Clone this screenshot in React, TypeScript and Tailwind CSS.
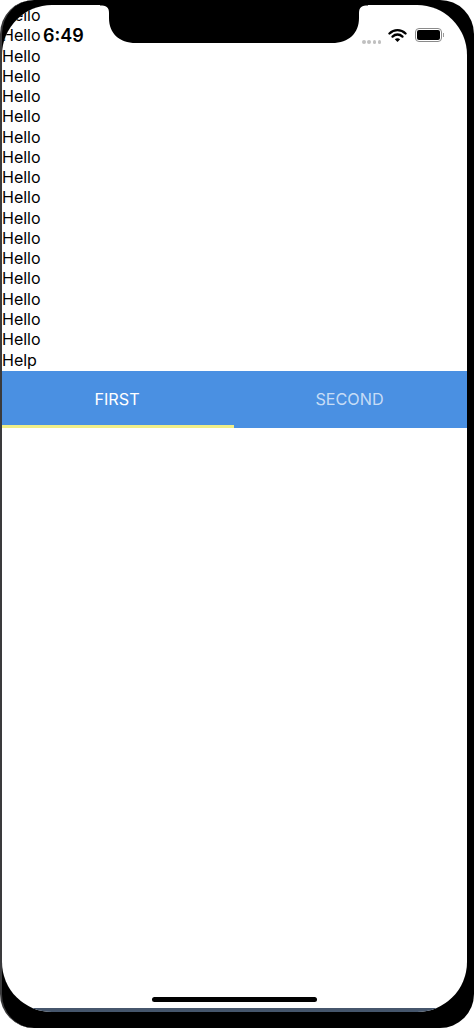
const ROWS = Array.from({ length: 17 }, () => 'Hello')

function Notch() {
  return (
    <svg className="absolute left-[98px] top-[4px]" width="268" height="40" viewBox="0 0 268 40" fill="#000">
      <path d="M0 0H268V1.5C262 1.5 259 3 259 9V14C259 29 249 39 232 39H36C19 39 9 29 9 14V9C9 3 6 1.5 0 1.5Z" />
    </svg>
  )
}

function StatusIcons() {
  return (
    <div className="absolute left-[360px] top-[27px] flex items-center">
      <div className="flex gap-[1.75px] mt-[13px]">
        <span className="w-[3.5px] h-[3.5px] rounded-full bg-[#c0c0c0]" />
        <span className="w-[3.5px] h-[3.5px] rounded-full bg-[#c0c0c0]" />
        <span className="w-[3.5px] h-[3.5px] rounded-full bg-[#c0c0c0]" />
        <span className="w-[3.5px] h-[3.5px] rounded-full bg-[#c0c0c0]" />
      </div>
      <svg className="ml-[7px]" width="19" height="15" viewBox="0 0 19 15">
        <path d="M1.5 5.5C6 1 13 1 17.5 5.5" fill="none" stroke="#000" strokeWidth="2.4" strokeLinecap="round" />
        <path d="M4.5 8.6C7.4 5.8 11.6 5.8 14.5 8.6" fill="none" stroke="#000" strokeWidth="2.3" strokeLinecap="round" />
        <path d="M9.5 14L6.8 11.2C8.3 9.9 10.7 9.9 12.2 11.2Z" fill="#000" />
      </svg>
      <div className="ml-[7.5px] w-[27px] h-[14px] rounded-[4px] border border-[#8a8a8a] p-[1px]">
        <div className="w-full h-full rounded-[2px] bg-black" />
      </div>
      <span className="ml-[1px] w-[1px] h-[4px] bg-[#9a9a9a]" />
    </div>
  )
}

export default function App() {
  return (
    <div className="w-[474px] h-[1028px] bg-white overflow-hidden font-['Inter',sans-serif]">
      <div className="relative w-full h-full bg-black rounded-[34px] border-l-2 border-[#3a3a3c] pt-[5px] pr-[7px] pb-[16px]">
        <div className="h-full bg-white rounded-[50px] overflow-hidden flex flex-col">
          <div className="text-[16px] leading-[20.26px] text-black pb-[1px]">
            {ROWS.map((r, i) => (
              <div key={i}>{r}</div>
            ))}
            <div>Help</div>
          </div>
          <div className="flex h-[57px] bg-[#4a90e2] text-[16.2px]">
            <div className="relative w-[232px] pr-[2px] flex items-center justify-center text-white">
              FIRST
              <span className="absolute left-0 right-0 bottom-0 h-[3px] bg-[#f0ee88]" />
            </div>
            <div className="flex-1 pr-[2px] flex items-center justify-center text-white/70">SECOND</div>
          </div>
          <div className="flex-1" />
          <div className="h-[4px] bg-[#46566c]" />
        </div>
        <div className="absolute left-[41px] top-[25px] text-[18px] leading-[22px] font-semibold text-black">6:49</div>
        <StatusIcons />
        <Notch />
        <div className="absolute left-[150px] top-[997px] w-[165px] h-[5px] rounded-full bg-black" />
      </div>
    </div>
  )
}
